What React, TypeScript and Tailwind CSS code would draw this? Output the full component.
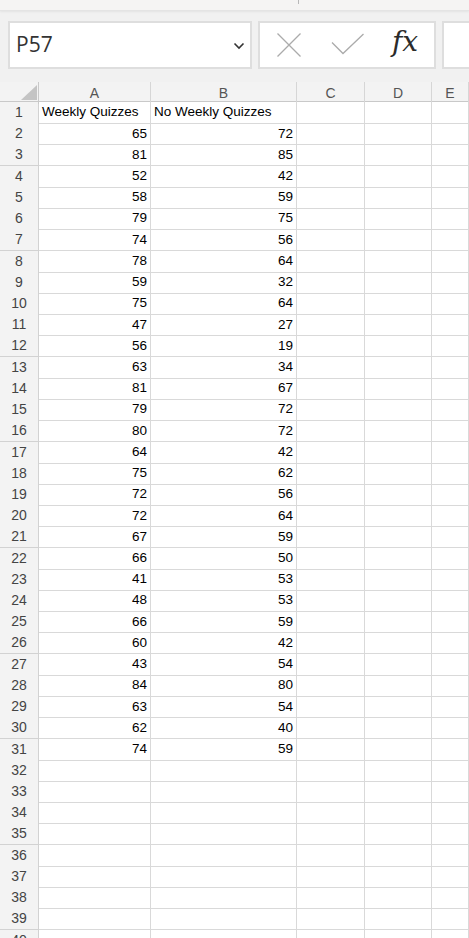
const colA = [65, 81, 52, 58, 79, 74, 78, 59, 75, 47, 56, 63, 81, 79, 80, 64, 75, 72, 72, 67, 66, 41, 48, 66, 60, 43, 84, 63, 62, 74];
const colB = [72, 85, 42, 59, 75, 56, 64, 32, 64, 27, 19, 34, 67, 72, 72, 42, 62, 56, 64, 59, 50, 53, 53, 59, 42, 54, 80, 54, 40, 59];

const rowCount = 40;
const gridCols = "grid grid-cols-[39px_112px_146px_68px_67px_1fr]";
const font = { fontFamily: '"Liberation Sans", Arial, sans-serif' };

function Toolbar() {
  return (
    <div className="relative bg-[#f1f1f1]">
      <div className="relative h-[11px] bg-[#f5f4f3] border-b border-[#e4e4e4] shadow-[0_1px_2px_rgba(0,0,0,0.06)]">
        <div className="absolute left-[298px] top-0 w-px h-[4px] bg-[#b8b8b8]" />
      </div>
      <div className="flex items-start pt-[10px] pl-[8px] h-[71px]">
        <div className="w-[244px] h-[48px] bg-white border-2 border-[#dedede] flex items-center justify-between pl-[6px] pr-[5px]">
          <span className="text-[21px] text-[#333]" style={{ fontFamily: '"Open Sans", sans-serif' }}>P57</span>
          <svg width="12" height="8" viewBox="0 0 12 8" className="mt-[1px]">
            <path d="M1.5 1.5 L6 6 L10.5 1.5" fill="none" stroke="#333" strokeWidth="1.6" />
          </svg>
        </div>
        <div className="ml-[6px] w-[178px] h-[48px] bg-white border-2 border-[#dedede] relative">
          <svg width="26" height="26" viewBox="0 0 26 26" className="absolute left-[16px] top-[9px]">
            <path d="M1.5 1.5 L24.5 24.5 M24.5 1.5 L1.5 24.5" stroke="#ababab" strokeWidth="1.3" fill="none" />
          </svg>
          <svg width="34" height="24" viewBox="0 0 34 24" className="absolute left-[71px] top-[10px]">
            <path d="M1 9.5 L12 20.5 L32.5 1" stroke="#ababab" strokeWidth="1.3" fill="none" />
          </svg>
          <span
            className="absolute left-[132px] top-[5px] text-[28px] italic text-[#2b2b2b] leading-none"
            style={{ fontFamily: '"DejaVu Serif", "Liberation Serif", serif' }}
          >
            fx
          </span>
        </div>
        <div className="ml-[6px] flex-1 h-[48px] bg-white border-2 border-r-0 border-[#dedede]" />
      </div>
    </div>
  );
}

function HeaderRow() {
  const letters = ["A", "B", "C", "D", "E"];
  return (
    <div className={`${gridCols} h-[20px] bg-[#f3f3f3] border-b border-[#c9c9c9]`}>
      <div className="relative border-r border-[#c9c9c9]">
        <svg width="16" height="15" viewBox="0 0 16 15" className="absolute left-[21px] top-[3px]">
          <path d="M16 0 L16 15 L0 15 Z" fill="#c4c4c4" />
        </svg>
      </div>
      {letters.map((l) => (
        <div key={l} className="flex items-center justify-center text-[14px] text-[#555] border-r border-[#d6d6d6] pt-[1px]">
          {l}
        </div>
      ))}
    </div>
  );
}

function Row({ n }: { n: number }) {
  let a: string | number = "";
  let b: string | number = "";
  let left = false;
  if (n === 1) {
    a = "Weekly Quizzes";
    b = "No Weekly Quizzes";
    left = true;
  } else if (n - 2 < colA.length) {
    a = colA[n - 2];
    b = colB[n - 2];
  }
  const cell = "border-r border-b border-[#d9d9d9] flex items-center px-[3px] text-[13.5px] text-black whitespace-nowrap overflow-hidden";
  return (
    <div className={`${gridCols} h-[21.22px]`}>
      <div className="bg-[#f3f3f3] border-r border-b border-[#d2d2d2] flex items-center justify-center text-[14px] text-[#444]">
        {n}
      </div>
      <div className={`${cell} ${left ? "justify-start" : "justify-end"}`}>{a}</div>
      <div className={`${cell} ${left ? "justify-start" : "justify-end"}`}>{b}</div>
      <div className={cell} />
      <div className={cell} />
      <div className={cell} />
    </div>
  );
}

export default function App() {
  return (
    <div className="w-[469px] h-[938px] overflow-hidden bg-white" style={font}>
      <Toolbar />
      <HeaderRow />
      {Array.from({ length: rowCount }, (_, i) => (
        <Row key={i} n={i + 1} />
      ))}
    </div>
  );
}
